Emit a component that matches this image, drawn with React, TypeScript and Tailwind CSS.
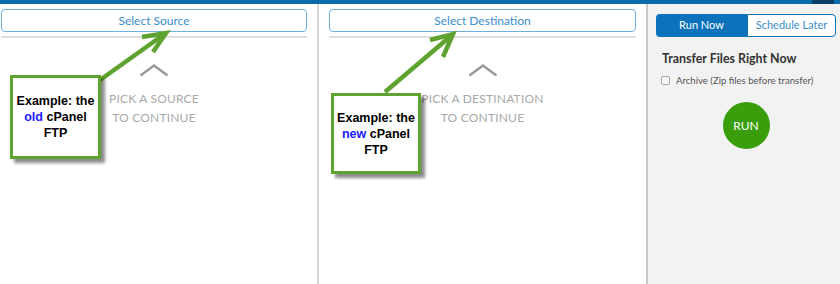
import React from "react";

const UI = "font-['Lato','Open_Sans',sans-serif]";

function Chevron() {
  return (
    <svg width="30" height="14" viewBox="0 0 30 14" className="mx-auto">
      <path d="M1.5 12.5 L15 2.5 L28.5 12.5" fill="none" stroke="#9a9a9a" strokeWidth="2.6" />
    </svg>
  );
}

function Column({ label, pick, className }: { label: string; pick: string; className: string }) {
  return (
    <div className={`flex flex-col ${className}`}>
      <div className="h-[34px] shrink-0 border-b-2 border-[#dedede] pt-[5px]">
        <button className="flex h-[23px] w-full items-center justify-center rounded-[4px] border border-[#6fb1de] bg-white text-[12px] text-[#3b8dcb]">
          {label}
        </button>
      </div>
      <div className="flex flex-col items-center pt-[25px] text-center">
        <Chevron />
        <div className="mt-[12px] text-[12px] leading-[19px] tracking-[0.2px] text-[#a9a9a9]">
          <div>{pick}</div>
          <div>TO CONTINUE</div>
        </div>
      </div>
    </div>
  );
}

function Callout({ word, className }: { word: string; className: string }) {
  return (
    <div
      className={`absolute flex flex-col items-center justify-center border-[3px] border-[#5ea32f] bg-white text-center font-['Liberation_Sans',Arial,sans-serif] text-[12.5px] font-bold leading-[16px] text-black shadow-[4px_4px_3px_rgba(0,0,0,0.45)] ${className}`}
    >
      <div>Example: the</div>
      <div>
        <span className="text-[#1a1aff]">{word}</span> cPanel
      </div>
      <div>FTP</div>
    </div>
  );
}

export default function App() {
  return (
    <div className={`relative flex h-[284px] w-[840px] flex-col overflow-hidden bg-white ${UI}`}>
      {/* top bar */}
      <div className="relative h-[4px] shrink-0 bg-[#0b6aa9]">
        <div className="absolute right-[6px] top-0 h-[4px] w-[22px] bg-[#0a3f66]" />
      </div>

      <div className="flex flex-1">
        <Column
          label="Select Source"
          pick="PICK A SOURCE"
          className="w-[319px] border-r-2 border-[#d6d6d6] pl-[1px] pr-[10px]"
        />
        <Column
          label="Select Destination"
          pick="PICK A DESTINATION"
          className="w-[329px] border-r-2 border-[#c8c8c8] px-[10px]"
        />

        {/* right panel */}
        <div className="flex flex-1 flex-col bg-[#f2f2f2] pl-[8px] pr-[4px] pt-[10px]">
          <div className="flex h-[23px] text-[11px]">
            <div className="flex w-[91px] items-center justify-center rounded-l-[4px] bg-[#0b72bb] text-white">
              Run Now
            </div>
            <div className="flex flex-1 items-center justify-center rounded-r-[4px] border border-[#0b72bb] bg-white text-[#3b8dcb]">
              Schedule Later
            </div>
          </div>
          <div className="mt-[13px] pl-[6px] text-[12.4px] font-bold text-[#333]">Transfer Files Right Now</div>
          <label className="mt-[5px] flex items-center gap-[6px] pl-[5px] text-[9.6px] text-[#555]">
            <span className="h-[9px] w-[9px] rounded-[2px] border border-[#a9a9a9] bg-[#f5f5f5]" />
            Archive (Zip files before transfer)
          </label>
          <div className="mt-[14px] flex justify-center">
            <div className="flex h-[47px] w-[47px] items-center justify-center rounded-full bg-[#3a9e0c] text-[12px] text-white">
              RUN
            </div>
          </div>
        </div>
      </div>

      {/* annotations */}
      <svg className="pointer-events-none absolute left-0 top-0" width="840" height="284" fill="none" stroke="#5ea32f" strokeWidth="4.5" strokeLinecap="butt" strokeLinejoin="miter">
        <path d="M100 80 L166 33" />
        <path d="M142 37 L166 33 L153 52" />
        <path d="M385 92 L452 35" />
        <path d="M430 40 L453 34 L443 57" />
      </svg>
      <Callout word="old" className="left-[10px] top-[75px] h-[84px] w-[91px]" />
      <Callout word="new" className="left-[331px] top-[93px] h-[81px] w-[90px]" />
    </div>
  );
}
